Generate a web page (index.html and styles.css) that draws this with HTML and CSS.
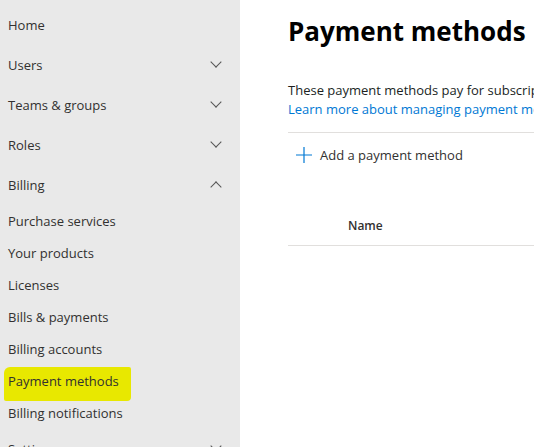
FILE: index.html
```html
<!DOCTYPE html>
<html lang="en">
<head>
<meta charset="UTF-8">
<title>Payment methods</title>
<link rel="stylesheet" href="styles.css">
</head>
<body>

<!-- left navigation -->
<nav class="sidebar">
    <div class="nav-item">Home</div>
    <div class="nav-item">Users <span class="chev down"></span></div>
    <div class="nav-item">Teams &amp; groups <span class="chev down"></span></div>
    <div class="nav-item">Roles <span class="chev down"></span></div>
    <div class="nav-item">Billing <span class="chev up"></span></div>
    <div class="sub-item">Purchase services</div>
    <div class="sub-item">Your products</div>
    <div class="sub-item">Licenses</div>
    <div class="sub-item">Bills &amp; payments</div>
    <div class="sub-item">Billing accounts</div>
    <div class="sub-item marked">Payment methods</div>
    <div class="sub-item">Billing notifications</div>
    <div class="nav-item">Settings <span class="chev down"></span></div>
</nav>

<!-- page content -->
<main class="content">
    <h1>Payment methods</h1>
    <p class="intro">These payment methods pay for subscriptions you bought<br>
    <a href="#">Learn more about managing payment methods</a></p>

    <div class="toolbar">
        <button class="add-btn">
            <svg width="16" height="16" viewBox="0 0 16 16"><path d="M8 0v16M0 8h16" stroke="#0078d4" stroke-width="1.2" fill="none"/></svg>
            Add a payment method
        </button>
    </div>

    <div class="table-head">
        <span class="col-name">Name</span>
    </div>
</main>

</body>
</html>
```

FILE: styles.css
```css
body {
margin: 0;
height: 447px;
overflow: hidden;
display: flex;
font-family: "Open Sans", "Noto Sans", sans-serif;
color: #323130;
background: #fff;
}

.sidebar {
width: 240px;
flex-shrink: 0;
background: #e9e9e9;
padding-top: 5px;
}

.nav-item {
height: 40px;
display: flex;
align-items: center;
justify-content: space-between;
padding: 0 20px 0 8px;
font-size: 13px;
}

.sub-item {
height: 32px;
display: flex;
align-items: center;
padding: 0 8px;
font-size: 13px;
position: relative;
}

/* hand drawn highlight */
.sub-item.marked {
z-index: 1;
}

.sub-item.marked::before {
content: "";
position: absolute;
left: 4px;
top: 2px;
width: 127px;
height: 34px;
background: #e8e800;
border-radius: 6px 2px 4px 2px;
z-index: -1;
}

.chev {
width: 7px;
height: 7px;
border-right: 1px solid #555;
border-bottom: 1px solid #555;
}

.chev.down {
transform: translateY(-3px) rotate(45deg);
}

.chev.up {
transform: translateY(2px) rotate(-135deg);
}

.content {
flex: 1;
padding-left: 48px;
overflow: hidden;
white-space: nowrap;
}

.content h1 {
margin: 13px 0 0;
font-size: 26px;
font-weight: 700;
color: #000;
}

.intro {
margin: 32px 0 0;
font-size: 13px;
line-height: 19px;
color: #201f1e;
}

.intro a {
color: #0078d4;
text-decoration: none;
}

.toolbar {
margin-top: 13px;
border-top: 1px solid #e1dfdd;
height: 44px;
display: flex;
align-items: center;
}

.add-btn {
background: none;
border: none;
display: flex;
align-items: center;
gap: 8px;
padding: 0 0 0 8px;
font-family: inherit;
font-size: 13px;
color: #323130;
}

.table-head {
margin-top: 40px;
height: 25px;
border-bottom: 1px solid #e1dfdd;
font-size: 12px;
font-weight: 600;
padding-left: 60px;
padding-bottom: 3px;
}
```
